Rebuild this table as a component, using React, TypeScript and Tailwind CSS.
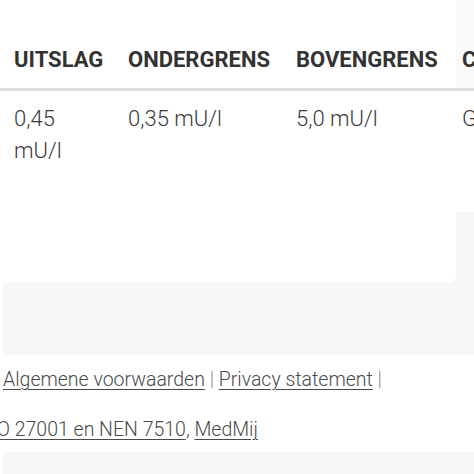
import React from "react";

export default function App() {
  const font = { fontFamily: "Roboto, 'Liberation Sans', sans-serif" };
  return (
    <div
      className="w-[474px] h-[474px] overflow-hidden bg-white text-[#333]"
      style={font}
    >
      {/* table area */}
      <div className="flex flex-col w-[474px]">
        {/* header row */}
        <div className="flex h-[88px] text-[22px] leading-[32px] font-bold text-[#333] whitespace-nowrap">
          <div className="w-[114px] shrink-0 pl-[14px] pt-[44px] bg-white">UITSLAG</div>
          <div className="w-[168px] shrink-0 pl-[14px] pt-[44px] bg-white">ONDERGRENS</div>
          <div className="w-[174px] shrink-0 pl-[14px] pt-[44px] bg-white">BOVENGRENS</div>
          <div className="flex-1 pl-[6px] pt-[44px] bg-[#f9f9f9] overflow-hidden">CONCLUSIE</div>
        </div>
        <div className="h-[3px] bg-[#dedede]" />
        {/* body row */}
        <div className="flex h-[121px] text-[22px] leading-[32px] font-light text-[#3a3a3a] bg-white">
          <div className="w-[114px] shrink-0 pl-[14px] pt-[12px] pr-[30px]">0,45 mU/l</div>
          <div className="w-[168px] shrink-0 pl-[14px] pt-[12px] whitespace-nowrap">0,35 mU/l</div>
          <div className="w-[174px] shrink-0 pl-[14px] pt-[12px] whitespace-nowrap">5,0 mU/l</div>
          <div className="flex-1 pl-[6px] pt-[12px] whitespace-nowrap overflow-hidden">Goed</div>
        </div>
        {/* card bottom */}
        <div className="flex h-[70px] bg-[#f7f7f7]">
          <div className="w-[456px] bg-white rounded-br-[6px]" />
        </div>
        <div className="flex h-[2px]">
          <div className="w-[3px] bg-white" />
          <div className="flex-1 bg-[#f7f7f7]" />
        </div>
        {/* gray band */}
        <div className="ml-[3px] h-[71px] bg-[#f7f7f7] rounded-l-[3px]" />
      </div>

      {/* footer */}
      <div className="pt-[11px] text-[19.5px] leading-[28px] font-light text-[#4a4a4a] whitespace-nowrap">
        <div className="pl-[3px]">
          <span className="underline underline-offset-[3px] decoration-1">Algemene voorwaarden</span>
          <span className="text-[#8a8a8a]"> | </span>
          <span className="underline underline-offset-[3px] decoration-1">Privacy statement</span>
          <span className="text-[#8a8a8a]"> |</span>
        </div>
        <div className="mt-[22px] ml-[-20px]">
          <span className="underline underline-offset-[3px] decoration-1">ISO 27001 en NEN 7510</span>
          <span>, </span>
          <span className="underline underline-offset-[3px] decoration-1">MedMij</span>
        </div>
      </div>
      <div className="mt-[8px] ml-[3px] h-[40px] bg-[#f7f7f7] rounded-tl-[3px]" />
    </div>
  );
}
